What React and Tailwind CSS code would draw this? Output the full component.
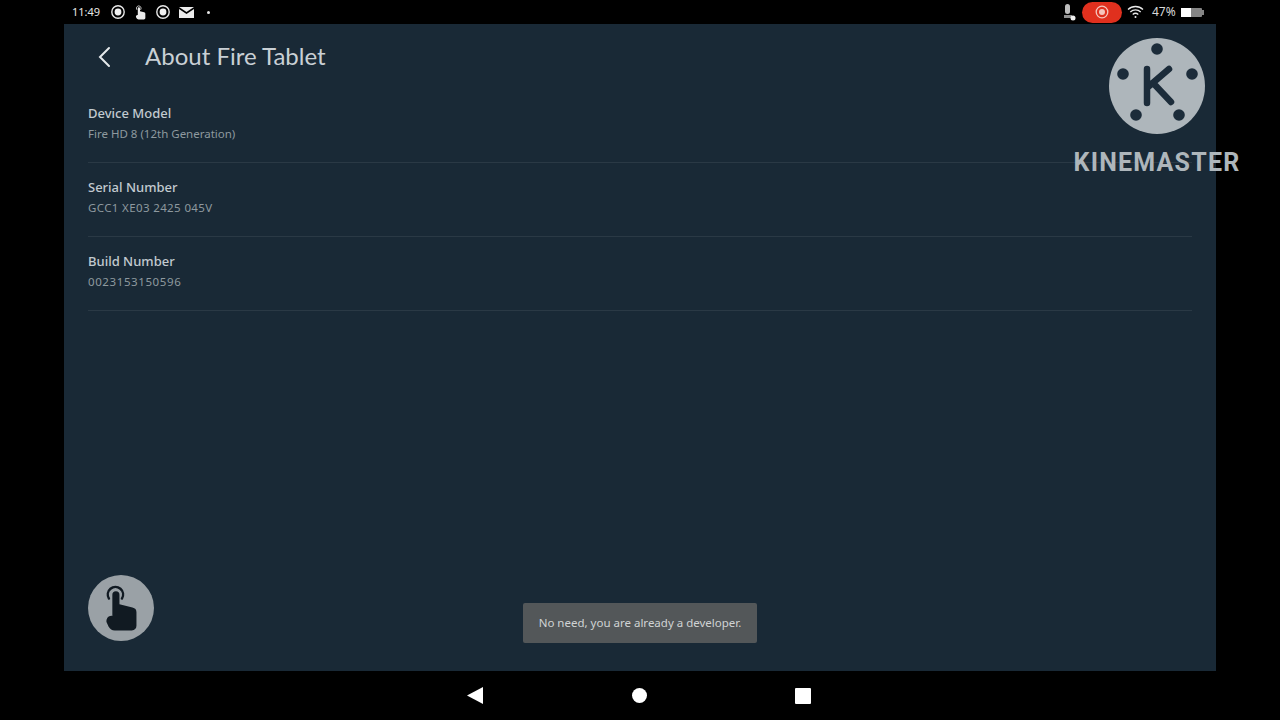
import React from "react";

const rows = [
  { label: "Device Model", value: "Fire HD 8 (12th Generation)", valueClass: "" },
  { label: "Serial Number", value: "GCC1 XE03 2425 045V", valueClass: "tracking-[0.37px]" },
  { label: "Build Number", value: "0023153150596", valueClass: "tracking-[0.6px]" },
];

function RingIcon() {
  return (
    <svg width="16" height="16" viewBox="0 0 16 16">
      <circle cx="8" cy="8" r="6.2" fill="none" stroke="#e8e8e8" strokeWidth="1.4" />
      <circle cx="8" cy="8" r="3.4" fill="#f2f2f2" />
    </svg>
  );
}

function TouchIcon({ width, height, color }) {
  return (
    <svg width={width} height={height} viewBox="100 65 110 155" fill={color}>
      <path d="M116 112a24.700 24.700 0 1 1 42 0" fill="none" stroke={color} strokeWidth="8" strokeLinecap="round" />
      <path d="M127 100a11.500 11.500 0 0 1 23 0v30l42 11c9 2 13 7 13 15v44c0 9-6 15-15 15h-55c-10 0-15-4-20-12l-7-15c-1-12 7-22 19-20z" />
    </svg>
  );
}

function StatusBar() {
  return (
    <div className="h-6 shrink-0 flex items-center justify-between pl-[72px] pr-[76px]">
      <div className="flex items-center">
        <span className="text-[11px] text-[#e6e6e6] w-[38px]">11:49</span>
        <RingIcon />
        <span className="ml-[9px] flex"><TouchIcon width={11} height={15} color="#ececec" /></span>
        <span className="ml-[9px] flex"><RingIcon /></span>
        <svg className="ml-2" width="15" height="11" viewBox="0 0 15 11">
          <path d="M0 0h15L7.500 5z" fill="#ececec" />
          <path d="M0 2l7.500 5L15 2v9H0z" fill="#ececec" />
        </svg>
        <span className="ml-[13px] w-[3px] h-[3px] rounded-full bg-[#e6e6e6]" />
      </div>
      <div className="flex items-center">
        <svg width="14" height="18" viewBox="0 0 14 18">
          <rect x="3" y="1" width="5" height="10" rx="2.500" fill="#bdbdbd" />
          <path d="M2 12h8v3H2z" fill="#8f8f8f" />
          <circle cx="11" cy="15" r="2.500" fill="#f0f0f0" />
        </svg>
        <div className="ml-[6px] w-10 h-[21px] rounded-full bg-[#e0301e] flex items-center justify-center">
          <svg width="14" height="14" viewBox="0 0 14 14">
            <circle cx="7" cy="7" r="5.800" fill="none" stroke="#f5c5bd" strokeWidth="1.300" />
            <circle cx="7" cy="7" r="3" fill="#f5c5bd" />
          </svg>
        </div>
        <svg className="ml-[5px]" width="17" height="14" viewBox="0 0 17 14" fill="none" stroke="#e8e8e8" strokeWidth="1.300">
          <path d="M1 4.500c4.200-4 10.800-4 15 0" />
          <path d="M3.300 7c3-2.800 7.400-2.800 10.400 0" />
          <path d="M5.700 9.500c1.700-1.500 3.900-1.500 5.600 0" />
          <circle cx="8.500" cy="12" r="1" fill="#e8e8e8" stroke="none" />
        </svg>
        <span className="ml-2 w-[25px] text-[12px] text-[#d8d8d8] whitespace-nowrap">47%</span>
        <div className="ml-1 flex items-center">
          <div className="w-[10px] h-[9px] bg-white" />
          <div className="w-[11px] h-[9px] bg-[#858585] rounded-r-[1px]" />
          <div className="w-[2px] h-[5px] bg-[#858585]" />
        </div>
      </div>
    </div>
  );
}

function Watermark() {
  return (
    <div className="absolute left-[1074px] top-[38px] w-[166px] flex flex-col items-center">
      <svg width="96" height="96" viewBox="0 0 96 96">
        <circle cx="48" cy="48" r="48" fill="#aeb6bb" />
        <circle cx="48" cy="11" r="5.800" fill="#1c2c3a" />
        <circle cx="14" cy="36" r="5.800" fill="#1c2c3a" />
        <circle cx="83" cy="36" r="5.800" fill="#1c2c3a" />
        <circle cx="27" cy="77" r="5.800" fill="#1c2c3a" />
        <circle cx="70" cy="77" r="5.800" fill="#1c2c3a" />
        <path d="M38 31v34M39 49l21-18M46 47l16 17" fill="none" stroke="#1c2c3a" strokeWidth="6.500" strokeLinecap="round" />
      </svg>
      <span className="mt-[15px] text-[25px] leading-[28px] font-bold text-[#aeb6bb] whitespace-nowrap font-['Roboto',sans-serif] tracking-[1.2px]">KINEMASTER</span>
    </div>
  );
}

export default function App() {
  return (
    <div className="relative w-[1280px] h-[720px] bg-black overflow-hidden flex flex-col font-['Noto_Sans',sans-serif]">
      <StatusBar />

      <div className="relative mx-16 flex-1 bg-[#192936] flex flex-col px-6">
        <div className="h-[65px] shrink-0 flex items-center">
          <svg className="ml-[9px]" width="14" height="22" viewBox="0 0 14 22" fill="none" stroke="#e4e8ea" strokeWidth="2" strokeLinecap="round">
            <path d="M12 2L3 11l9 9" />
          </svg>
          <h1 className="ml-[34px] mb-[2px] text-[24px] text-[#c9d0d5] font-['Lato',sans-serif]">About Fire Tablet</h1>
        </div>

        {rows.map(row => (
          <div key={row.label} className="h-[74px] border-b border-[#2a3945] pt-[14px]">
            <div className="text-[13px] leading-[20px] font-medium text-[#c2cad0]">{row.label}</div>
            <div className={`mt-[2px] text-[11.5px] leading-[18px] text-[#8e999f] ${row.valueClass}`}>{row.value}</div>
          </div>
        ))}

        <div className="absolute left-6 bottom-[30px] w-[66px] h-[66px] rounded-full bg-[#9aa1a6] flex items-center justify-center">
          <TouchIcon width={34} height={48} color="#111a22" />
        </div>

        <div className="absolute left-[459px] bottom-7 w-[234px] h-10 bg-[#535759] rounded-[2px] flex items-center justify-center text-[11.5px] text-[#d0d3d4]">
          No need, you are already a developer.
        </div>
      </div>

      <div className="h-[49px] shrink-0 flex items-center justify-center">
        <div className="w-[344px] mr-[2px] flex items-center justify-between">
          <svg width="16" height="17" viewBox="0 0 16 17"><path d="M16 0v17L0 8.500z" fill="#fff" /></svg>
          <span className="w-[15px] h-[15px] rounded-full bg-white" />
          <span className="w-4 h-4 bg-white rounded-[1px]" />
        </div>
      </div>

      <Watermark />
    </div>
  );
}
